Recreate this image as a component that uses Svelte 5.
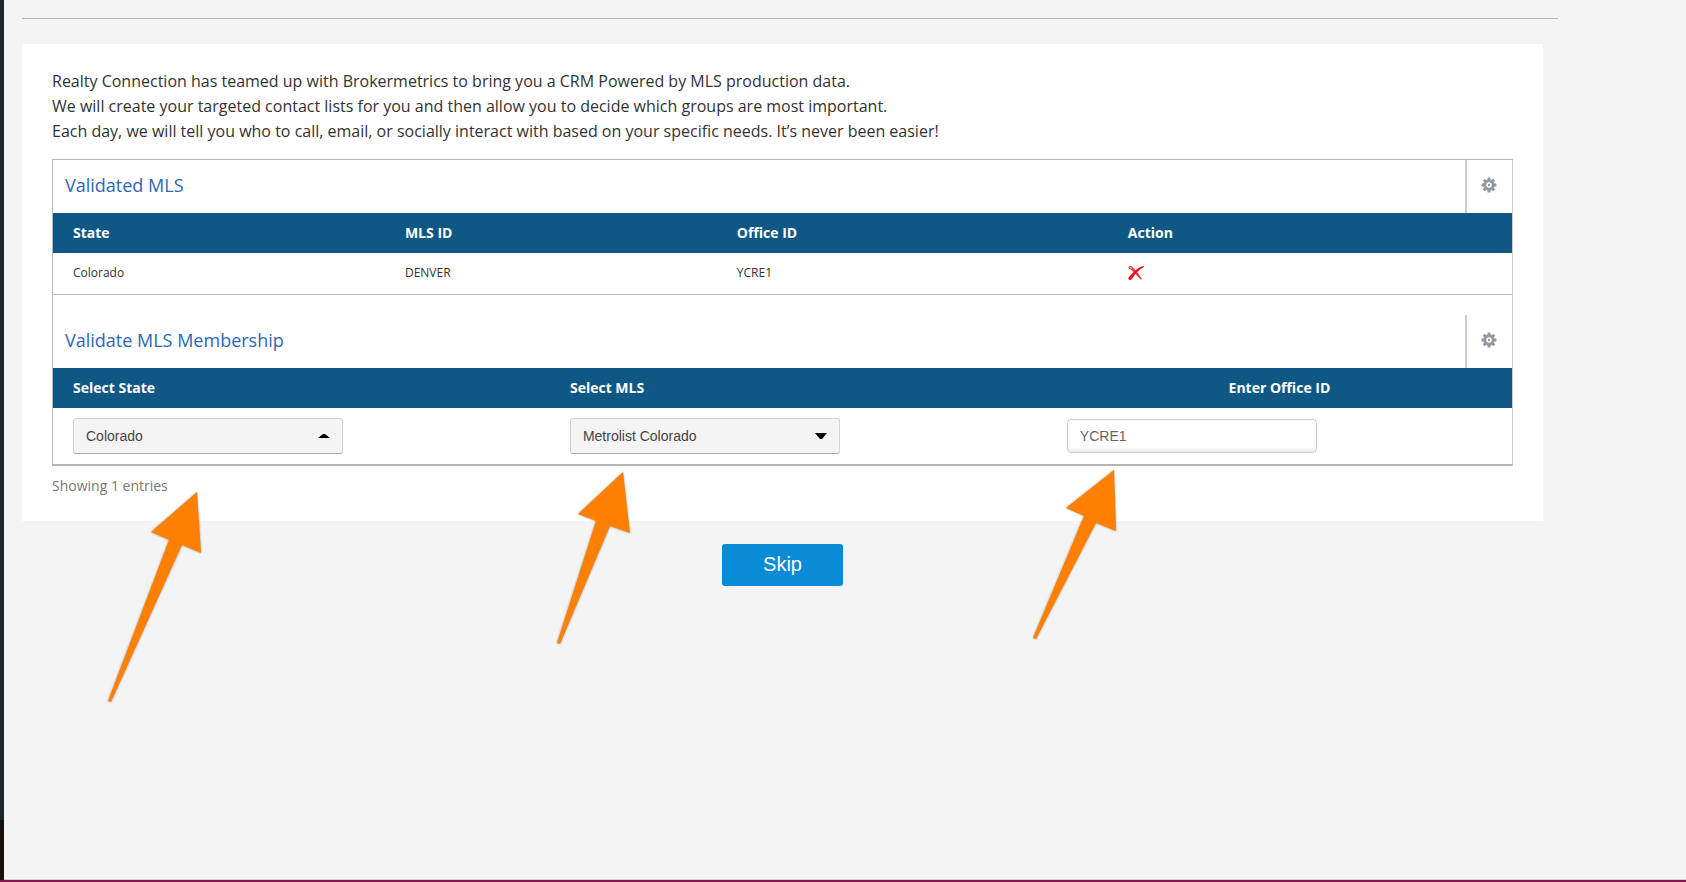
<script>
let states = ["Colorado", "Arizona", "Utah"]
let mlsList = ["Metrolist Colorado", "IRES", "Pikes Peak"]
let validated = [{state: "Colorado", mls: "DENVER", office: "YCRE1"}]
let chosenState = "Colorado"
let chosenMls = "Metrolist Colorado"
let officeId = "YCRE1"

$: total = validated.length

let arrows = [
    "197,492 151,532 169,540 108,701 111,702 182,545 201,553",
    "623,472 578,514 596,521 557,643 560,644 610,526 630,533",
    "1114,470 1066,508 1084,516 1033,638 1036,639 1096,523 1116,531"
]

function removeMls(row){
    validated = validated.filter(v => v !== row)
}
</script>

{#snippet titleBar(title)}
<div class="title-bar">
    <h2>{title}</h2>
    <button class="gear" type="button" aria-label="Settings">
        <svg width="16" height="16" viewBox="0 0 16 16">
            <g fill="#929ba1">
                {#each [0, 45, 90, 135] as angle}
                    <rect x="6.5" y="0.5" width="3" height="15" rx="0.5" transform="rotate({angle} 8 8)" />
                {/each}
                <circle cx="8" cy="8" r="5.8" />
            </g>
            <circle cx="8" cy="8" r="2.7" fill="#fff" />
            <circle cx="8" cy="8" r="1.2" fill="#929ba1" />
        </svg>
    </button>
</div>
{/snippet}

<div class="page">
<div class="rail"></div>
<main>
<hr>
<section class="card">
    <p class="intro">
        Realty Connection has teamed up with Brokermetrics to bring you a CRM Powered by MLS production data.<br>
        We will create your targeted contact lists for you and then allow you to decide which groups are most important.<br>
        Each day, we will tell you who to call, email, or socially interact with based on your specific needs. It’s never been easier!
    </p>

    <div class="box">
        {@render titleBar("Validated MLS")}
        <table class="validated">
            <thead>
                <tr><th>State</th><th>MLS ID</th><th>Office ID</th><th>Action</th></tr>
            </thead>
            <tbody>
            {#each validated as row}
                <tr>
                    <td>{row.state}</td>
                    <td>{row.mls}</td>
                    <td>{row.office}</td>
                    <td>
                        <button class="remove" type="button" aria-label="Remove" on:click={() => removeMls(row)}>
                            <svg width="16" height="16" viewBox="0 0 16 16">
                                <path d="M0.5 2.2 C1 0.8 3.5 0.6 4.5 2 C7 4.6 11 9 14 14 L12.6 14.6 C9.5 11 6 7 2.5 4.2 C1.3 3.9 0.4 3.2 0.5 2.2Z" fill="#f0343a" />
                                <path d="M15.7 0.8 L15.8 2 C11 4.6 7 9 4.4 13.2 C3.6 15.3 1.2 15.6 0.4 14 C0.1 12.7 1.4 11.4 2.6 10.2 C6 6 10.4 2.4 15.7 0.8Z" fill="#ea1016" />
                                <path d="M1.3 2.4 C1.6 1.6 2.8 1.6 3.6 2.4 L5 4.2 L2.7 3.4Z" fill="#f9a5a5" />
                            </svg>
                        </button>
                    </td>
                </tr>
            {/each}
            </tbody>
        </table>

        <div class="spacer"></div>
        {@render titleBar("Validate MLS Membership")}
        <table class="membership">
            <thead>
                <tr>
                    <th><label for="state">Select State</label></th>
                    <th><label for="mls">Select MLS</label></th>
                    <th class="center"><label for="office">Enter Office ID</label></th>
                </tr>
            </thead>
            <tbody>
                <tr>
                    <td>
                        <div class="select">
                            <select id="state" bind:value={chosenState}>
                                {#each states as s}<option>{s}</option>{/each}
                            </select>
                            <svg width="12" height="6" viewBox="0 0 12 6"><path d="M0 5 L5 1 H7 L12 5Z" /></svg>
                        </div>
                    </td>
                    <td>
                        <div class="select">
                            <select id="mls" bind:value={chosenMls}>
                                {#each mlsList as m}<option>{m}</option>{/each}
                            </select>
                            <svg width="12" height="6" viewBox="0 0 12 6"><path d="M0 0 H12 L7 6 H5Z" /></svg>
                        </div>
                    </td>
                    <td><input id="office" type="text" bind:value={officeId}></td>
                </tr>
            </tbody>
        </table>
    </div>
    <p class="count">Showing {total} entries</p>
</section>
<div class="actions">
    <button class="skip" type="button">Skip</button>
</div>
</main>

<!-- callout arrows drawn over the form -->
<svg class="arrows" width="1130" height="720" viewBox="0 0 1130 720" aria-hidden="true">
    {#each arrows as points}
        <polygon {points} />
    {/each}
</svg>
</div>

<style>
:global(body){
    background-color: #f4f4f4;
}
.page{
    box-sizing: border-box;
    position: relative;
    display: flex;
    min-height: 100vh;
    border-bottom: 2px solid #7f184c;
    background-color: #f4f4f4;
    font-family: "Open Sans", "Noto Sans", sans-serif;
    color: #333;
}
.rail{
    flex: none;
    width: 4px;
    background: linear-gradient(#22252b calc(100% - 60px), #15120f calc(100% - 60px));
}
main{
    flex: 1;
    box-sizing: border-box;
    min-width: 0;
    padding: 18px 128px 20px 18px;
    border-bottom: 1px solid #cfcfcf;
}
hr{
    margin: 0 0 25px;
    border: 0;
    border-top: 1px solid #b3b3b3;
}
.card{
    margin-right: 15px;
    padding: 25px 30px;
    background-color: #fff;
}
.intro{
    margin: 0 0 15px;
    font-size: 16px;
    line-height: 25px;
}
.box{
    border: 1px solid #b5b5b5;
    border-right-color: #ccc;
    border-bottom-width: 2px;
}
.title-bar{
    display: flex;
    height: 53px;
}
.title-bar h2{
    flex: 1;
    margin: 0;
    padding-left: 12px;
    font-size: 18px;
    font-weight: 400;
    line-height: 51px;
    color: #2d67b8;
}
.gear{
    display: flex;
    align-items: center;
    justify-content: center;
    width: 47px;
    padding: 0 2px 3px 0;
    border: 0;
    border-left: 2px solid #ccc;
    background: none;
}
.spacer{
    height: 20px;
    border-top: 1px solid #b5b5b5;
}
table{
    width: 100%;
    table-layout: fixed;
    border-collapse: collapse;
}
th{
    box-sizing: border-box;
    height: 40px;
    padding: 0 0 1px 20px;
    background-color: #0f5886;
    color: #fff;
    font-size: 14px;
    font-weight: 700;
    line-height: 20px;
    text-align: left;
}
th.center{
    padding-left: 0;
    text-align: center;
}
.validated td{
    box-sizing: border-box;
    height: 41px;
    padding: 0 0 2px 20px;
    font-size: 12px;
}
.validated th:nth-child(-n+2){
    width: 22.75%;
}
.validated th:nth-child(3){
    width: 26.8%;
}
.remove{
    display: block;
    padding: 0;
    border: 0;
    background: none;
}
.remove svg{
    display: block;
}
.membership th:nth-child(-n+2){
    width: 34.06%;
}
.membership td{
    padding: 10px 0 10px 20px;
}
.select{
    position: relative;
    width: 270px;
}
.select svg{
    position: absolute;
    right: 13px;
    top: 15px;
    pointer-events: none;
}
select{
    appearance: none;
    display: block;
    box-sizing: border-box;
    width: 100%;
    height: 36px;
    padding: 0 32px 0 12px;
    border: 1px solid #d5d5d5;
    border-bottom-color: #aaa;
    border-radius: 3px;
    background-color: #f4f4f4;
    color: #444;
    font: 14px "Liberation Sans", Arial, sans-serif;
}
input{
    display: block;
    box-sizing: border-box;
    width: 250px;
    height: 34px;
    padding: 0 12px;
    border: 1px solid #ccc;
    border-radius: 4px;
    background-color: #fff;
    box-shadow: inset 0 -3px 3px #eee;
    color: #666;
    font: 14px "Liberation Sans", Arial, sans-serif;
}
.count{
    margin: 0;
    padding-top: 10px;
    color: #777;
    font-size: 14px;
    line-height: 20px;
}
.actions{
    display: flex;
    justify-content: center;
    margin-right: 15px;
    padding-top: 23px;
}
.skip{
    width: 121px;
    height: 42px;
    padding: 0 0 2px;
    border: 0;
    border-radius: 3px;
    background-color: #0a8bd6;
    color: #fff;
    font: 20px "Liberation Sans", Arial, sans-serif;
}
.arrows{
    position: absolute;
    left: 0;
    top: 0;
    pointer-events: none;
}
.arrows polygon{
    fill: #ff8000;
    filter: drop-shadow(0 0 1px rgba(0, 0, 0, 0.4));
}
</style>
